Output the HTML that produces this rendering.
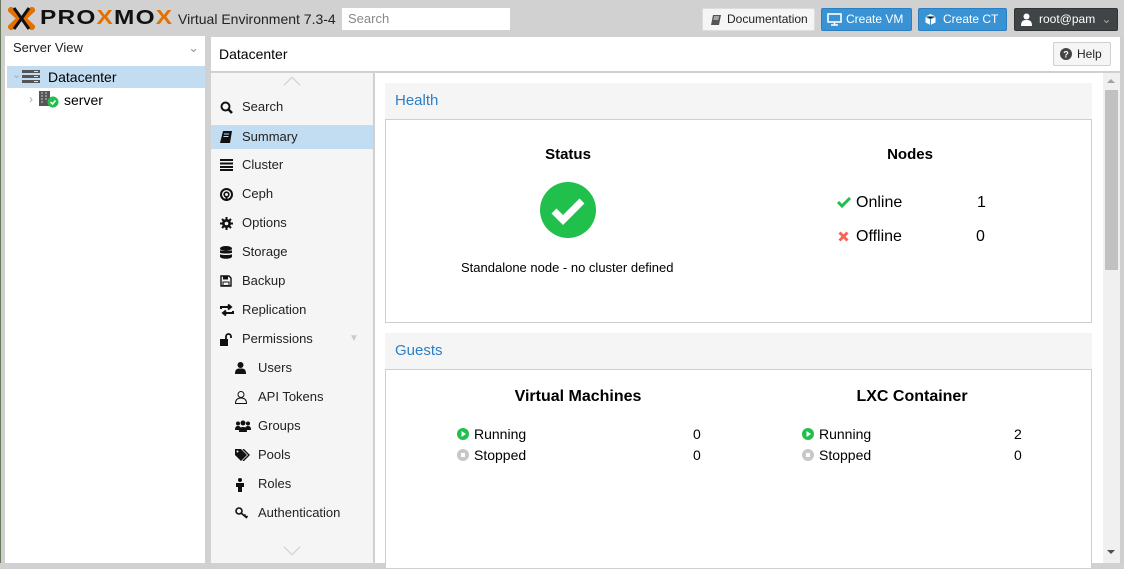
<!DOCTYPE html>
<html><head><meta charset="utf-8"><style>
*{margin:0;padding:0;box-sizing:border-box}
body{width:1124px;height:563px;overflow:hidden;background:#d1d1d1;font-family:"Liberation Sans",Arial,sans-serif;font-size:13px;color:#000;position:relative}
.a{position:absolute}
.btn{position:absolute;top:8px;height:23px;border-radius:2px;font-size:12px;line-height:21px;padding-left:24px}
.nav div.i{position:absolute;left:0;width:162px;height:24px;line-height:24px;padding-left:31px;font-size:13px;color:#222}
.nav svg{position:absolute;left:9px;top:6px}
.sub{padding-left:47px!important}
.sub svg{left:24px!important}
.ph{position:absolute;left:385px;width:707px;height:36px;background:#f5f5f5;color:#2a7fc9;font-size:15px;line-height:36px;padding-left:10px}
.pb{position:absolute;left:385px;width:707px;background:#fff;border:1px solid #cfcfcf}
.t{position:absolute;font-weight:bold;font-size:15px;text-align:center}
.r{position:absolute;font-size:14px}
</style></head><body>
<div class="a" style="left:0;top:0;width:5px;height:563px;background:#6a7a5a"></div>
<div class="a" style="left:1px;top:0;width:4px;height:563px;background:#cfcfcf"></div>
<svg class="a" style="left:8px;top:7px" width="27" height="23" viewBox="0 0 27 23"><path d="M1 1l11 10.5L1 22" fill="none" stroke="#e57000" stroke-width="6"/><path d="M26 1L15 11.5 26 22" fill="none" stroke="#e57000" stroke-width="6"/><path d="M6 1l7.5 10.5L6 22M21 1l-7.5 10.5L21 22" fill="none" stroke="#111" stroke-width="3"/></svg>
<div class="a" style="left:40px;top:8px;font-weight:900;font-size:20px;line-height:20px;letter-spacing:1px;transform:scaleX(1.22);transform-origin:left;color:#111">PRO<span style="color:#e57000">X</span>MO<span style="color:#e57000">X</span></div>
<div class="a" style="left:178px;top:11px;font-size:14px;color:#222">Virtual Environment 7.3-4</div>
<div class="a" style="left:342px;top:8px;width:168px;height:22px;background:#fff;color:#888;font-size:13px;line-height:22px;padding-left:6px">Search</div>
<div class="btn" style="left:702px;width:113px;background:#f5f5f5;border:1px solid #ddd;color:#222">
<svg class="a" style="left:7px;top:5px" width="12" height="12" viewBox="0 0 12 12"><path d="M3 1h8l-2 10H1z" fill="#555"/><path d="M4 3h5M3.5 5h5" stroke="#f5f5f5"/></svg>Documentation</div>
<div class="btn" style="left:821px;width:91px;background:#3892d4;border:1px solid #2a7fc0;color:#fff">
<svg class="a" style="left:5px;top:4px" width="15" height="13" viewBox="0 0 15 13"><rect x="1" y="1" width="13" height="8" fill="none" stroke="#fff" stroke-width="1.6"/><path d="M7.5 9v3M4 12h7" stroke="#fff" stroke-width="1.6"/></svg>Create VM</div>
<div class="btn" style="left:918px;width:89px;background:#3892d4;border:1px solid #2a7fc0;color:#fff">
<svg class="a" style="left:5px;top:4px" width="13" height="13" viewBox="0 0 13 13"><path d="M6.5 1l5 2.5v6l-5 2.5-5-2.5v-6z" fill="#fff"/><path d="M1.5 3.5l5 2.5 5-2.5M6.5 6v6" stroke="#3892d4"/></svg>Create CT</div>
<div class="btn" style="left:1014px;width:104px;background:#3f4446;border:1px solid #333;color:#fff;padding-left:24px">
<svg class="a" style="left:6px;top:4px" width="11" height="13" viewBox="0 0 11 13"><circle cx="5.5" cy="3.5" r="3" fill="#fff"/><path d="M0 13c0-5 2-6 5.5-6s5.5 1 5.5 6z" fill="#fff"/></svg>root@pam <span style="color:#aaa;margin-left:3px">&#8964;</span></div>
<div class="a" style="left:5px;top:36px;width:200px;height:527px;background:#fff"></div>
<div class="a" style="left:7px;top:37px;width:198px;height:22px;font-size:13px;line-height:22px;padding-left:6px;color:#222">Server View<span style="position:absolute;right:6px;color:#999">&#8964;</span></div>
<div class="a" style="left:7px;top:66px;width:198px;height:22px;background:#c2ddf2"></div>
<div class="a" style="left:12px;top:68px;color:#aaa;font-size:11px">&#8964;</div>
<svg class="a" style="left:22px;top:70px" width="18" height="13" viewBox="0 0 18 13"><rect x="0" y="0" width="18" height="3" fill="#555"/><rect x="0" y="5" width="18" height="3" fill="#555"/><rect x="0" y="10" width="18" height="3" fill="#555"/><path d="M12 1.5h4M12 6.5h4M12 11.5h4" stroke="#ddd"/></svg>
<div class="a" style="left:48px;top:69px;font-size:14px">Datacenter</div>
<div class="a" style="left:29px;top:92px;color:#aaa;font-size:12px">›</div>
<svg class="a" style="left:39px;top:91px" width="20" height="17" viewBox="0 0 20 17"><rect x="0" y="0" width="11" height="15" fill="#555"/><path d="M2 2h2M6 2h2M2 5h2M6 5h2M2 8h2M6 8h2M2 11h2" stroke="#ccc"/><circle cx="14" cy="11" r="5.5" fill="#21bf4b"/><path d="M11.5 11l2 2 3-3.5" stroke="#fff" stroke-width="1.5" fill="none"/></svg>
<div class="a" style="left:64px;top:92px;font-size:14px">server</div>
<div class="a" style="left:211px;top:37px;width:909px;height:35px;background:#fff;border-bottom:1px solid #cfcfcf"></div>
<div class="a" style="left:219px;top:46px;font-size:14px">Datacenter</div>
<div class="a" style="left:1053px;top:42px;width:58px;height:24px;border:1px solid #d0d0d0;background:#f5f5f5;border-radius:2px;font-size:12px;line-height:22px;padding-left:23px;color:#222">
<svg class="a" style="left:6px;top:5px" width="12" height="12" viewBox="0 0 12 12"><circle cx="6" cy="6" r="6" fill="#444"/><text x="6" y="9.5" font-size="9" font-weight="bold" fill="#fff" text-anchor="middle" font-family="Liberation Sans">?</text></svg>Help</div>
<div class="a nav" style="left:211px;top:73px;width:163px;height:490px;background:#f5f5f5;border-right:1px solid #cfcfcf">
<div class="a" style="left:75px;top:6px;width:12px;height:12px;border-left:1px solid #ccc;border-top:1px solid #ccc;transform:rotate(45deg)"></div>
<div class="i" style="top:22px"><svg width="13" height="13" viewBox="0 0 13 13"><circle cx="5.5" cy="5.5" r="4" fill="none" stroke="#111" stroke-width="2"/><path d="M8.5 8.5l3.5 3.5" stroke="#111" stroke-width="2.5"/></svg>Search</div>
<div class="i" style="top:52px;background:#c2ddf2"><svg width="12" height="12" viewBox="0 0 12 12"><path d="M3 0h9l-2 12H0z" fill="#111"/><path d="M4 3h5M3.5 5.5h5" stroke="#c2ddf2"/></svg>Summary</div>
<div class="i" style="top:80px"><svg width="13" height="12" viewBox="0 0 13 12"><path d="M0 1h13M0 4.5h13M0 8h13M0 11h13" stroke="#111" stroke-width="2"/></svg>Cluster</div>
<div class="i" style="top:109px"><svg width="13" height="13" viewBox="0 0 13 13"><circle cx="6.5" cy="6.5" r="5.5" fill="none" stroke="#111" stroke-width="2"/><circle cx="6.5" cy="6.5" r="2.3" fill="none" stroke="#111" stroke-width="1.6"/><path d="M6.5 9v4" stroke="#111" stroke-width="2"/></svg>Ceph</div>
<div class="i" style="top:138px"><svg width="13" height="13" viewBox="0 0 13 13"><circle cx="6.5" cy="6.5" r="4.5" fill="#111"/><path d="M6.5 0v13M0 6.5h13M2 2l9 9M11 2l-9 9" stroke="#111" stroke-width="2"/><circle cx="6.5" cy="6.5" r="1.8" fill="#f5f5f5"/></svg>Options</div>
<div class="i" style="top:167px"><svg width="12" height="13" viewBox="0 0 12 13"><ellipse cx="6" cy="2.5" rx="6" ry="2.5" fill="#111"/><path d="M0 4v2.5c0 1.4 12 1.4 12 0V4c0 1.4-12 1.4-12 0zM0 8v2.5c0 3 12 3 12 0V8c0 1.4-12 1.4-12 0z" fill="#111"/></svg>Storage</div>
<div class="i" style="top:196px"><svg width="12" height="12" viewBox="0 0 12 12"><path d="M1 1h8l2 2v8H1z" fill="none" stroke="#111" stroke-width="1.4"/><rect x="3" y="1" width="5" height="3.5" fill="#111"/><rect x="3" y="7" width="6" height="3.5" fill="none" stroke="#111"/></svg>Backup</div>
<div class="i" style="top:225px"><svg width="14" height="12" viewBox="0 0 14 12"><path d="M1 5V3h9M8 0.5l3 2.5-3 2.5M13 7v2H4M6 11.5 3 9l3-2.5" fill="none" stroke="#111" stroke-width="2"/></svg>Replication</div>
<div class="i" style="top:254px"><svg width="13" height="13" viewBox="0 0 13 13"><rect x="0" y="6" width="8" height="7" fill="#111"/><path d="M6 6V3.5a2.5 2.5 0 0 1 5 0V5" fill="none" stroke="#111" stroke-width="1.8"/></svg>Permissions<span style="position:absolute;left:138px;top:0;color:#ccc;font-size:10px">&#9660;</span></div>
<div class="i sub" style="top:283px"><svg width="11" height="12" viewBox="0 0 11 12"><circle cx="5.5" cy="3" r="3" fill="#111"/><path d="M0 12c0-5 2-5.5 5.5-5.5S11 7 11 12z" fill="#111"/></svg>Users</div>
<div class="i sub" style="top:312px"><svg width="12" height="13" viewBox="0 0 12 13"><circle cx="6" cy="3.5" r="3" fill="none" stroke="#111"/><path d="M.5 12.5c0-4 2-5.5 5.5-5.5s5.5 1.5 5.5 5.5z" fill="none" stroke="#111"/></svg>API Tokens</div>
<div class="i sub" style="top:341px"><svg width="16" height="12" viewBox="0 0 16 12"><circle cx="8" cy="3" r="2.5" fill="#111"/><circle cx="3" cy="3.5" r="2" fill="#111"/><circle cx="13" cy="3.5" r="2" fill="#111"/><path d="M4 12c0-4 1.5-5 4-5s4 1 4 5zM0 10c0-3 1-4 3-4s3 1 3 4zM10 10c0-3 1-4 3-4s3 1 3 4z" fill="#111"/></svg>Groups</div>
<div class="i sub" style="top:370px"><svg width="15" height="12" viewBox="0 0 15 12"><path d="M0 0h6l6 6-6 6-6-6z" fill="#111"/><path d="M8 0l6 6-6 6" fill="none" stroke="#111" stroke-width="1.4"/><circle cx="2.5" cy="2.5" r="1" fill="#f5f5f5"/></svg>Pools</div>
<div class="i sub" style="top:399px"><svg width="10" height="14" viewBox="0 0 10 14"><circle cx="5" cy="2" r="2" fill="#111"/><path d="M1 5h8v4H7v5H3V9H1z" fill="#111"/></svg>Roles</div>
<div class="i sub" style="top:428px"><svg width="14" height="12" viewBox="0 0 14 12"><circle cx="4" cy="4" r="3" fill="none" stroke="#111" stroke-width="1.6"/><path d="M6 6l6 5M9 9l1.5-1.5M11 10.5l1.5-1.5" stroke="#111" stroke-width="1.6"/></svg>Authentication</div>
<div class="a" style="left:75px;top:468px;width:12px;height:12px;border-right:1px solid #ccc;border-bottom:1px solid #ccc;transform:rotate(45deg)"></div>
</div>
<div class="a" style="left:375px;top:73px;width:745px;height:490px;background:#fff"></div>
<div class="a" style="left:1103px;top:73px;width:17px;height:490px;background:#f0f0f0"></div>
<div class="a" style="left:1105px;top:90px;width:13px;height:180px;background:#c1c1c1"></div>
<div class="a" style="left:1107px;top:79px;width:0;height:0;border:4px solid transparent;border-bottom-color:#a3a3a3;border-top:0"></div>
<div class="a" style="left:1107px;top:550px;width:0;height:0;border:4px solid transparent;border-top-color:#505050;border-bottom:0"></div>
<div class="a" style="left:1120px;top:36px;width:4px;height:527px;background:#cfcfcf"></div>
<div class="ph" style="top:83px">Health</div>
<div class="pb" style="top:119px;height:204px"></div>
<div class="t" style="left:518px;top:146px;width:100px">Status</div>
<svg class="a" style="left:540px;top:182px" width="56" height="56" viewBox="0 0 56 56"><circle cx="28" cy="28" r="28" fill="#21bf4b"/><path d="M14 29l9 9 19-19" fill="none" stroke="#fff" stroke-width="7"/></svg>
<div class="r" style="left:461px;top:260px;font-size:13px">Standalone node - no cluster defined</div>
<div class="t" style="left:860px;top:146px;width:100px">Nodes</div>
<svg class="a" style="left:837px;top:197px" width="14" height="11" viewBox="0 0 14 11"><path d="M1 5l4 4 8-8" fill="none" stroke="#21bf4b" stroke-width="3"/></svg>
<div class="r" style="left:856px;top:194px;font-size:16px">Online</div>
<div class="r" style="left:977px;top:194px;font-size:16px">1</div>
<svg class="a" style="left:838px;top:231px" width="11" height="11" viewBox="0 0 11 11"><path d="M1.5 1.5l8 8M9.5 1.5l-8 8" stroke="#f5655a" stroke-width="3"/></svg>
<div class="r" style="left:856px;top:228px;font-size:16px">Offline</div>
<div class="r" style="left:976px;top:228px;font-size:16px">0</div>
<div class="ph" style="top:333px">Guests</div>
<div class="pb" style="top:369px;height:200px"></div>
<div class="t" style="left:478px;top:388px;width:200px;font-size:16px">Virtual Machines</div>
<div class="t" style="left:812px;top:388px;width:200px;font-size:16px">LXC Container</div>
<svg class="a" style="left:457px;top:428px" width="12" height="12" viewBox="0 0 12 12"><circle cx="6" cy="6" r="6" fill="#21bf4b"/><path d="M4.5 3v6l4.5-3z" fill="#fff"/></svg>
<div class="r" style="left:474px;top:426px">Running</div><div class="r" style="left:693px;top:426px">0</div>
<svg class="a" style="left:457px;top:449px" width="12" height="12" viewBox="0 0 12 12"><circle cx="6" cy="6" r="6" fill="#c8c8c8"/><rect x="4" y="4" width="4" height="4" fill="#fff"/></svg>
<div class="r" style="left:474px;top:447px">Stopped</div><div class="r" style="left:693px;top:447px">0</div>
<svg class="a" style="left:802px;top:428px" width="12" height="12" viewBox="0 0 12 12"><circle cx="6" cy="6" r="6" fill="#21bf4b"/><path d="M4.5 3v6l4.5-3z" fill="#fff"/></svg>
<div class="r" style="left:819px;top:426px">Running</div><div class="r" style="left:1014px;top:426px">2</div>
<svg class="a" style="left:802px;top:449px" width="12" height="12" viewBox="0 0 12 12"><circle cx="6" cy="6" r="6" fill="#c8c8c8"/><rect x="4" y="4" width="4" height="4" fill="#fff"/></svg>
<div class="r" style="left:819px;top:447px">Stopped</div><div class="r" style="left:1014px;top:447px">0</div>
</body></html>
